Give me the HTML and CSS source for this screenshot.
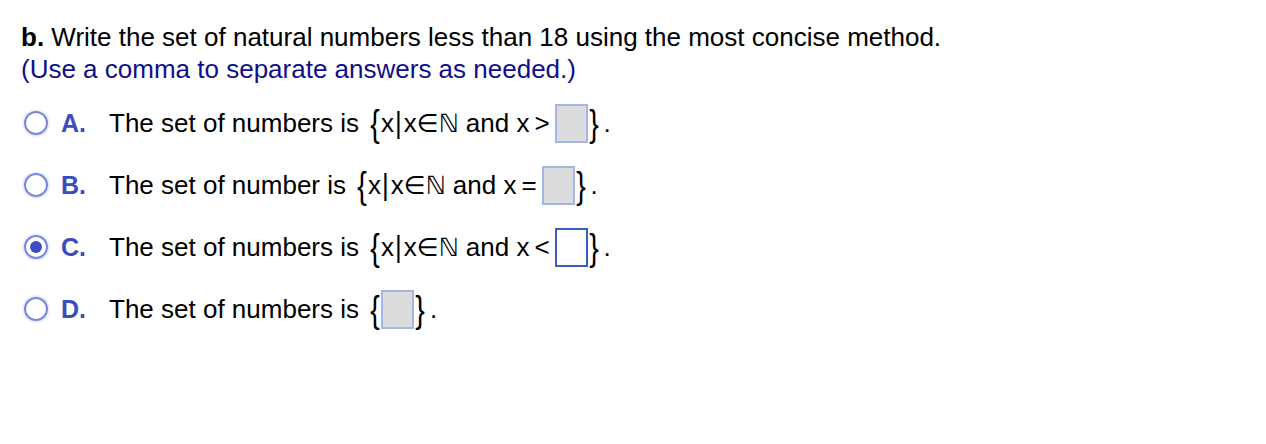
FILE: index.html
```html
<!DOCTYPE html>
<html>
<head>
<meta charset="utf-8">
<link rel="stylesheet" href="styles.css">
</head>
<body>
<div class="q">
  <div class="line"><b>b.</b> Write the set of natural numbers less than 18 using the most concise method.</div>
  <div class="line hint">(Use a comma to separate answers as needed.)</div>
  <div class="options">
    <div class="opt">
      <span class="radio"></span><span class="letter">A.</span>
      <span class="text">The set of numbers is</span>
      <span class="brace">{</span><span class="math">x<span class="bar">|</span>x<span class="sym">∈ℕ</span> and x<span class="op">&gt;</span></span><span class="box"></span><span class="brace">}</span><span class="dot">.</span>
    </div>
    <div class="opt">
      <span class="radio"></span><span class="letter">B.</span>
      <span class="text">The set of number is</span>
      <span class="brace">{</span><span class="math">x<span class="bar">|</span>x<span class="sym">∈ℕ</span> and x<span class="op">=</span></span><span class="box"></span><span class="brace">}</span><span class="dot">.</span>
    </div>
    <div class="opt">
      <span class="radio checked"></span><span class="letter">C.</span>
      <span class="text">The set of numbers is</span>
      <span class="brace">{</span><span class="math">x<span class="bar">|</span>x<span class="sym">∈ℕ</span> and x<span class="op">&lt;</span></span><span class="box active"></span><span class="brace">}</span><span class="dot">.</span>
    </div>
    <div class="opt">
      <span class="radio"></span><span class="letter">D.</span>
      <span class="text">The set of numbers is</span>
      <span class="brace">{</span><span class="box"></span><span class="brace">}</span><span class="dot">.</span>
    </div>
  </div>
</div>
</body>
</html>
```

FILE: styles.css
```css
html, body {
  margin: 0;
  padding: 0;
  background: #ffffff;
}
.q {
  padding: 21px 0 0 21px;
  font-family: "Liberation Sans", Arial, sans-serif;
  font-size: 26px;
  color: #000;
}
.line {
  line-height: 32px;
  white-space: nowrap;
}
.hint {
  color: #0f0f8a;
}
.options {
  margin-top: 7px;
}
.opt {
  display: flex;
  align-items: center;
  height: 62px;
  white-space: nowrap;
}
.radio {
  box-sizing: border-box;
  width: 24px;
  height: 24px;
  margin-left: 3px;
  border: 2px solid #7888dc;
  border-radius: 50%;
  box-shadow: 0 0 2px 1px rgba(140, 155, 230, 0.35);
  display: flex;
  align-items: center;
  justify-content: center;
  flex: none;
}
.radio.checked::after {
  content: "";
  width: 12px;
  height: 12px;
  border-radius: 50%;
  background: #3c4fc4;
}
.letter {
  margin-left: 13px;
  width: 48px;
  color: #3a4cc0;
  font-weight: bold;
  font-size: 25px;
}
.text {
  margin-right: 10px;
}
.brace {
  display: inline-block;
  line-height: 1;
  font-size: 26px;
  transform: scale(1.1, 1.45);
  width: 12px;
  text-align: center;
}
.math {
  white-space: pre;
}
.bar {
  display: inline-block;
  transform: scaleY(1.1);
  margin: 0 2px 0 1px;
}
.sym {
  font-family: "DejaVu Sans", sans-serif;
  font-size: 25px;
}
.op {
  margin: 0 0 0 5px;
}
.box {
  box-sizing: border-box;
  width: 33px;
  height: 39px;
  margin-left: 5px;
  background: #dcdcdc;
  border: 2px solid #a6b4e6;
  flex: none;
}
.box.active {
  background: #ffffff;
  border-color: #3c5bc4;
}
.opt .brace + .box {
  margin-left: 0;
}
.dot {
  margin-left: 4px;
}
```
